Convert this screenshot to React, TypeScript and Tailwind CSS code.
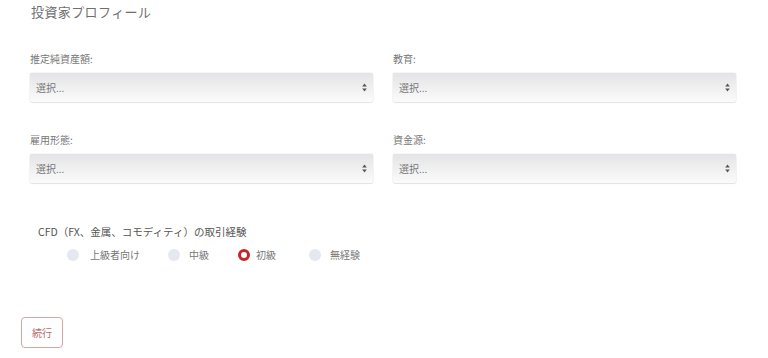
import { useState } from 'react';

const font = { fontFamily: '"Noto Sans CJK JP", "Liberation Sans", sans-serif' };

function SelectBox({ label }: { label: string }) {
  return (
    <div className="flex flex-col">
      <div className="h-[14px] text-[10px] leading-[14px] text-[#777]">{label}</div>
      <div className="mt-[7px] h-[29px] flex items-center justify-between pl-[6px] pr-[5px] rounded-[2px] bg-gradient-to-b from-[#e4e4e6] to-[#fbfbfb] shadow-[0_0_1px_rgba(0,0,0,0.35),0_1px_1px_rgba(0,0,0,0.08)]">
        <span className="text-[10px] text-[#777]">選択...</span>
        <svg width="5" height="9" viewBox="0 0 5 9" className="mr-[1px]">
          <path d="M2.5 0.5 L4.8 3.6 L0.2 3.6 Z" fill="#555" />
          <path d="M2.5 8.5 L4.8 5.4 L0.2 5.4 Z" fill="#555" />
        </svg>
      </div>
    </div>
  );
}

const options = [
  { label: '上級者向け', gap: 'gap-[11px]', after: 'mr-[28px]' },
  { label: '中級', gap: 'gap-[9px]', after: 'mr-[29px]' },
  { label: '初級', gap: 'gap-[6px]', after: 'mr-[33px]' },
  { label: '無経験', gap: 'gap-[9px]', after: '' },
];

export default function App() {
  const [level, setLevel] = useState('初級');

  return (
    <div className="w-[768px] h-[358px] bg-white overflow-hidden" style={font}>
      <div className="pl-[31px] pt-[3px] text-[13px] leading-[18px] text-[#6f6f6f] tracking-[0.4px]">
        投資家プロフィール
      </div>

      <div className="mt-[31px] pl-[30px] pr-[32px] grid grid-cols-2 gap-x-[20px] gap-y-[31px]">
        <SelectBox label="推定純資産額:" />
        <SelectBox label="教育:" />
        <SelectBox label="雇用形態:" />
        <SelectBox label="資金源:" />
      </div>

      <div className="mt-[42px] pl-[38px]">
        <div className="text-[10.5px] leading-[14px] text-[#555]">CFD（FX、金属、コモディティ）の取引経験</div>
        <div className="mt-[9px] pl-[29px] flex items-center h-[14px]">
          {options.map((opt) => {
            const checked = level === opt.label;
            return (
              <button
                key={opt.label}
                onClick={() => setLevel(opt.label)}
                className={`flex items-center ${opt.gap} ${opt.after}`}
              >
                {checked ? (
                  <span className="w-[12px] h-[12px] rounded-full border-[3.5px] border-[#c4262c] bg-white" />
                ) : (
                  <span className="w-[12px] h-[12px] rounded-full bg-[#e6e8ef]" />
                )}
                <span className="text-[10px] leading-[14px] text-[#777]">{opt.label}</span>
              </button>
            );
          })}
        </div>
      </div>

      <div className="mt-[55px] pl-[21px]">
        <button className="w-[42px] h-[31px] rounded-[4px] border border-[#d7a5a5] text-[10px] text-[#b36b6b] flex items-center justify-center">
          続行
        </button>
      </div>
    </div>
  );
}
